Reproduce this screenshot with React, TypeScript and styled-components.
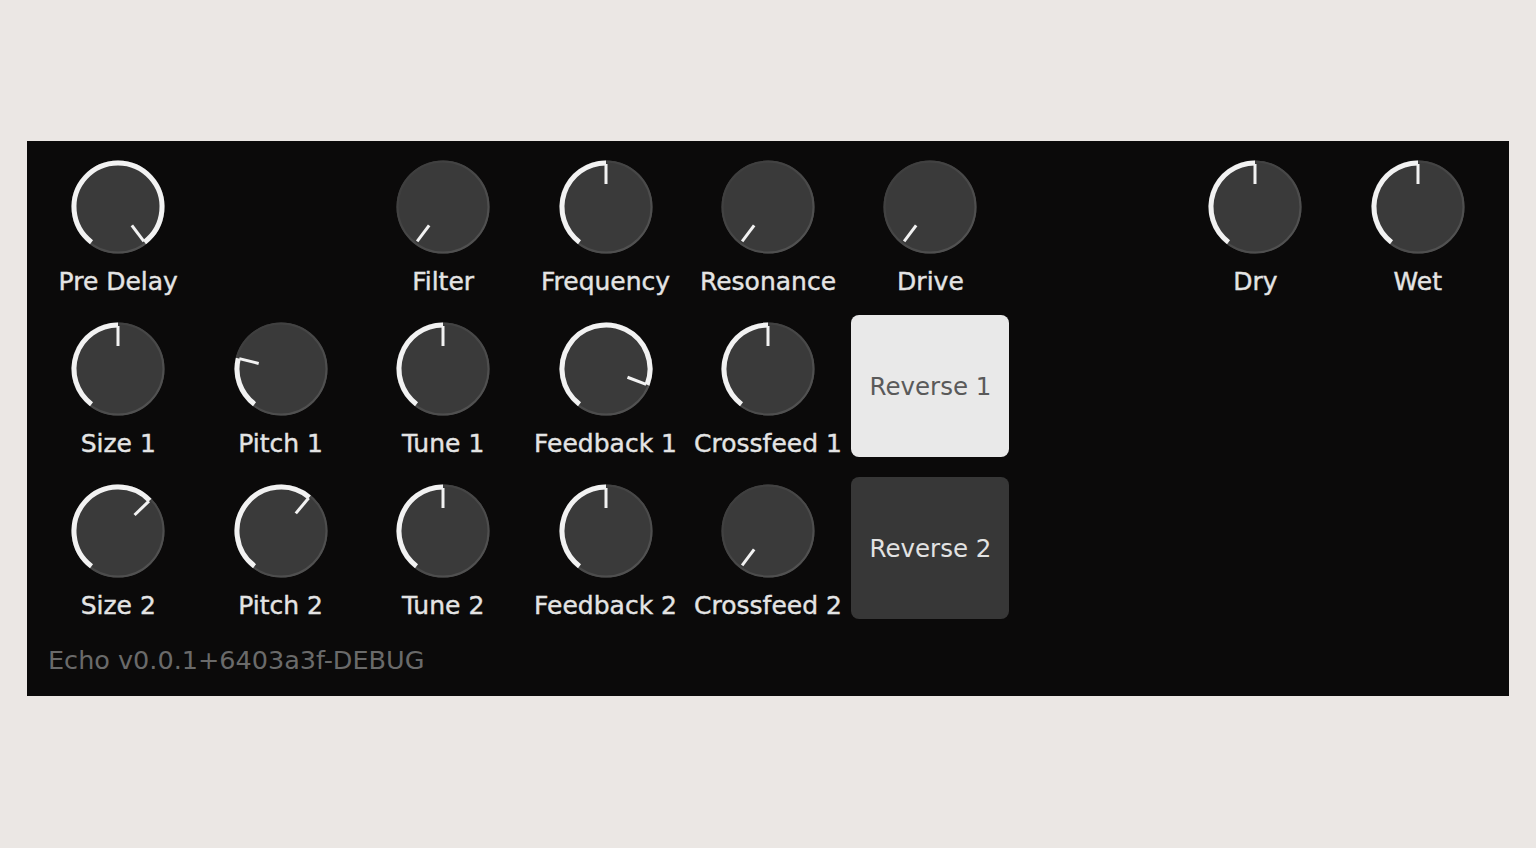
import React from "react";
import styled, { createGlobalStyle } from "styled-components";

const GlobalStyle = createGlobalStyle`
  html, body {
    margin: 0;
    padding: 0;
    background: #ebe7e4;
    font-family: "DejaVu Sans", Verdana, sans-serif;
  }
`;

const START = -143;

type KnobDef = { label: string; col: number; row: number; value: number };

const knobs: KnobDef[] = [
  { label: "Pre Delay", col: 1, row: 1, value: 143 },
  { label: "Filter", col: 3, row: 1, value: -143 },
  { label: "Frequency", col: 4, row: 1, value: 0 },
  { label: "Resonance", col: 5, row: 1, value: -143 },
  { label: "Drive", col: 6, row: 1, value: -143 },
  { label: "Dry", col: 8, row: 1, value: 0 },
  { label: "Wet", col: 9, row: 1, value: 0 },
  { label: "Size 1", col: 1, row: 2, value: 0 },
  { label: "Pitch 1", col: 2, row: 2, value: -76 },
  { label: "Tune 1", col: 3, row: 2, value: 0 },
  { label: "Feedback 1", col: 4, row: 2, value: 111 },
  { label: "Crossfeed 1", col: 5, row: 2, value: 0 },
  { label: "Size 2", col: 1, row: 3, value: 46 },
  { label: "Pitch 2", col: 2, row: 3, value: 40 },
  { label: "Tune 2", col: 3, row: 3, value: 0 },
  { label: "Feedback 2", col: 4, row: 3, value: 0 },
  { label: "Crossfeed 2", col: 5, row: 3, value: -143 },
];

const pt = (a: number, r: number) => {
  const rad = (a * Math.PI) / 180;
  return [50 + r * Math.sin(rad), 50 - r * Math.cos(rad)];
};

const Knob: React.FC<{ value: number }> = ({ value }) => {
  const [sx, sy] = pt(START, 44);
  const [ex, ey] = pt(value, 44);
  const large = value - START > 180 ? 1 : 0;
  const [p1x, p1y] = pt(value, 23);
  const [p2x, p2y] = pt(value, 43);
  return (
    <svg width="100" height="100" viewBox="0 0 100 100">
      <defs>
        <linearGradient id="rim" x1="0" y1="0" x2="1" y2="1">
          <stop offset="0" stopColor="#3a3a3a" />
          <stop offset="1" stopColor="#555" />
        </linearGradient>
      </defs>
      <circle cx="50" cy="50" r="46.5" fill="#3a3a3a" />
      <circle cx="50" cy="50" r="45.5" fill="none" stroke="url(#rim)" strokeWidth="2" />
      {value > START && (
        <path
          d={`M ${sx} ${sy} A 44 44 0 ${large} 1 ${ex} ${ey}`}
          fill="none"
          stroke="#f2f2f2"
          strokeWidth="5"
        />
      )}
      <line x1={p1x} y1={p1y} x2={p2x} y2={p2y} stroke="#f2f2f2" strokeWidth="3" />
    </svg>
  );
};

const App: React.FC = () => {
  return (
    <>
      <GlobalStyle />
      <Panel>
        <Grid>
          {knobs.map((k) => (
            <Cell key={k.label} $col={k.col} $row={k.row}>
              <Knob value={k.value} />
              <Label>{k.label}</Label>
            </Cell>
          ))}
          <ButtonCell $col={6} $row={2}>
            <ToggleButton $on>Reverse 1</ToggleButton>
          </ButtonCell>
          <ButtonCell $col={6} $row={3}>
            <ToggleButton>Reverse 2</ToggleButton>
          </ButtonCell>
        </Grid>
        <Footer>Echo v0.0.1+6403a3f-DEBUG</Footer>
      </Panel>
    </>
  );
};

const Panel = styled.div`
  box-sizing: border-box;
  margin: 141px 0 0 27px;
  width: 1482px;
  height: 555px;
  background: #0b0a0a;
  padding: 2px 10px 0;
`;

const Grid = styled.div`
  display: grid;
  grid-template-columns: repeat(9, 1fr);
  grid-template-rows: repeat(3, 162px);
`;

const Cell = styled.div<{ $col: number; $row: number }>`
  grid-column: ${(p) => p.$col};
  grid-row: ${(p) => p.$row};
  display: flex;
  flex-direction: column;
  align-items: center;
  padding-top: 14px;
`;

const Label = styled.div`
  margin-top: 12px;
  font-size: 25px;
  line-height: 26px;
  color: #e4e4e4;
  white-space: nowrap;
  -webkit-text-stroke: 0.4px #e4e4e4;
`;

const ButtonCell = styled.div<{ $col: number; $row: number }>`
  grid-column: ${(p) => p.$col};
  grid-row: ${(p) => p.$row};
  display: flex;
  align-items: center;
  justify-content: center;
`;

const ToggleButton = styled.div<{ $on?: boolean }>`
  width: 158px;
  height: 142px;
  border-radius: 8px;
  display: flex;
  align-items: center;
  justify-content: center;
  font-size: 24.5px;
  background: ${(p) => (p.$on ? "#e9e9e9" : "#373737")};
  color: ${(p) => (p.$on ? "#5a5a5a" : "#e2e2e2")};
`;

const Footer = styled.div`
  margin-top: 17px;
  padding-left: 11px;
  font-size: 25.5px;
  line-height: 28px;
  color: #6a6a6a;
`;

export default App;
